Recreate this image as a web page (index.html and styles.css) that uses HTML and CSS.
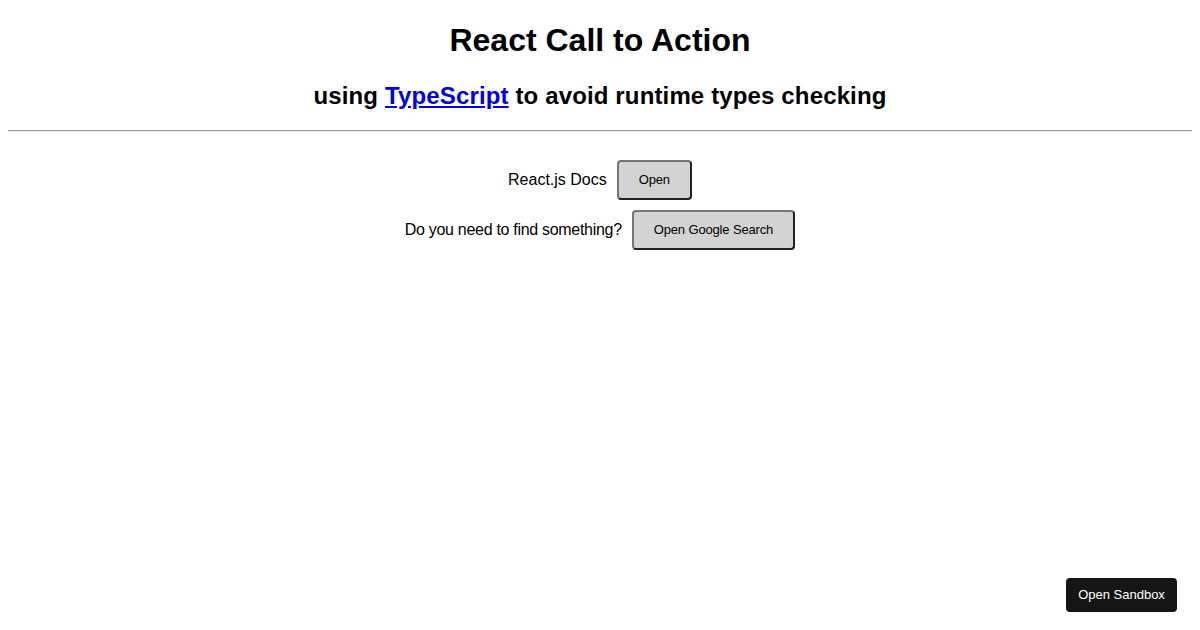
FILE: index.html
```html
<!DOCTYPE html>
<html>
<head>
<meta charset="utf-8">
<link rel="stylesheet" href="styles.css">
</head>
<body>
<header class="header">
  <h1 class="title">React Call to Action</h1>
  <h2 class="subtitle">using <a class="link" href="#">TypeScript</a> to avoid runtime types checking</h2>
</header>
<hr class="divider">
<main class="actions">
  <div class="row"><span class="label">React.js Docs</span><button class="btn">Open</button></div>
  <div class="row"><span class="label label-long">Do you need to find something?</span><button class="btn">Open Google Search</button></div>
</main>
<a class="sandbox" href="#">Open Sandbox</a>
</body>
</html>
```
FILE: styles.css
```css
html, body { background: #fff; }
body {
  margin: 8px;
  font-family: "Liberation Sans", Arial, sans-serif;
  color: #000;
}
.header { text-align: center; }
.title { font-size: 32px; margin: 14px 0 21.44px; }
.subtitle { font-size: 24px; margin: 23px 0 19.92px; letter-spacing: 0.14px; }
.link { color: #0000ee; text-decoration: underline; }
.divider {
  margin: 8px 0 0;
  border: 0;
  border-top: 1px solid #9a9a9a;
  border-bottom: 1px solid #eeeeee;
  height: 0;
}
.actions {
  display: flex;
  flex-direction: column;
  align-items: center;
  gap: 10px;
  padding-top: 28px;
}
.row {
  display: flex;
  align-items: center;
  gap: 10px;
}
.label { font-size: 16px; }
.label-long { letter-spacing: -0.3px; }
.btn {
  font-family: "Liberation Sans", Arial, sans-serif;
  font-size: 13px;
  letter-spacing: -0.15px;
  background: #d3d3d3;
  color: #000;
  border: 2px solid;
  border-color: #767676 #222 #222 #767676;
  border-radius: 4px;
  padding: 10px 20px;
  height: 40px;
  line-height: 16px;
}
.sandbox {
  position: fixed;
  right: 23px;
  bottom: 18px;
  width: 111px;
  text-align: center;
  background: #151515;
  color: #fff;
  font-family: "Liberation Sans", Arial, sans-serif;
  font-size: 13px;
  text-decoration: none;
  height: 34px;
  line-height: 34px;
  border-radius: 4px;
}
```
